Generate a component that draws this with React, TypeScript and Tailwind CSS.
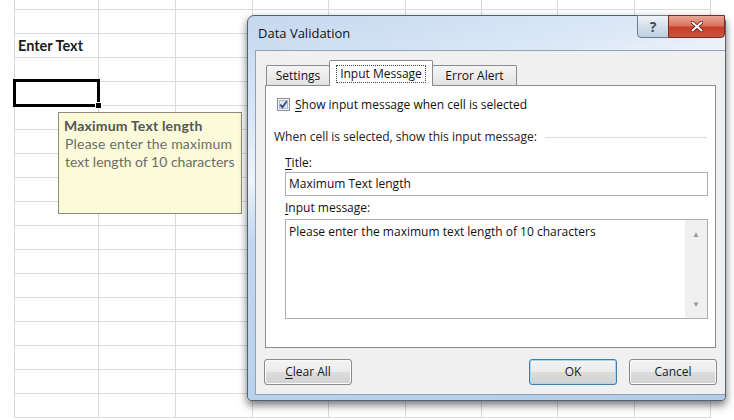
import React from 'react';

const colWidths = [84, 77, 77, 76, 77, 76, 76, 77, 76];
const rowHeights = [10, ...Array(17).fill(24)];

const dialogFont = { fontFamily: '"Open Sans", "Noto Sans", sans-serif' };
const sheetFont = { fontFamily: 'Lato, "Open Sans", sans-serif' };

function Checkbox() {
  return (
    <svg width="13" height="13" viewBox="0 0 13 13">
      <rect x="0.5" y="0.5" width="12" height="12" fill="#f4f4f4" stroke="#8e8f8f" />
      <rect x="2.5" y="2.5" width="8" height="8" fill="#dfe6ee" stroke="#b4bcc6" />
      <path d="M3.2 6.6 L5.4 9.2 L9.8 3.2" fill="none" stroke="#2c4a9a" strokeWidth="1.8" />
    </svg>
  );
}

function Button({ children, primary }: { children: React.ReactNode; primary?: boolean }) {
  return (
    <div
      className={
        'h-[26px] w-[88px] flex items-center justify-center rounded-[3px] border text-[12px] text-[#1a1a1a] bg-[linear-gradient(180deg,#f4f4f4_0%,#ebebeb_48%,#dcdcdc_52%,#d2d2d2_100%)] ' +
        (primary
          ? 'border-[#3c7fb1] shadow-[inset_0_0_0_1px_#a7d8f0]'
          : 'border-[#8a8a8a] shadow-[inset_0_0_0_1px_#fafafa]')
      }
    >
      {children}
    </div>
  );
}

export default function App() {
  return (
    <div className="relative w-[734px] h-[420px] overflow-hidden bg-white">
      {/* spreadsheet grid */}
      <div className="w-[726px] h-full overflow-hidden">
        <div className="ml-[14px] border-l border-[#dadada]" style={sheetFont}>
          {rowHeights.map((h, r) => (
            <div key={r} className="flex">
              {colWidths.map((w, c) => (
                <div
                  key={c}
                  className="shrink-0 border-r border-b border-[#dadada] flex items-center pl-[3px] text-[14.5px] font-bold text-[#1c1c1c]"
                  style={{ width: w, height: h }}
                >
                  {r === 2 && c === 0 ? 'Enter Text' : null}
                </div>
              ))}
            </div>
          ))}
        </div>
      </div>

      {/* selected cell */}
      <div className="absolute left-[13px] top-[79px] w-[87px] h-[28px] border-[3px] border-black" />
      <div className="absolute left-[95px] top-[102px] w-[7px] h-[7px] bg-black border border-white" />

      {/* input message tooltip */}
      <div
        className="absolute left-[58px] top-[112px] w-[184px] h-[102px] bg-[#fbfbd9] border border-[#8b8b80] pl-[5px] pt-[4px] leading-[18px] text-[14px] whitespace-nowrap"
        style={sheetFont}
      >
        <div className="font-bold text-[#555555] tracking-[0.2px]">Maximum Text length</div>
        <div className="text-[#6c6c6c] pl-px tracking-[0.2px]">Please enter the maximum</div>
        <div className="text-[#6c6c6c] pl-px">text length of 10 characters</div>
      </div>

      {/* Data Validation dialog */}
      <div
        className="absolute left-[247px] top-[15px] w-[479px] h-[386px] flex flex-col rounded-t-[7px] rounded-b-[4px] border border-[#56616e] bg-[linear-gradient(165deg,#c4d8ef_0%,#dce8f6_22%,#eef4fb_32%,#c2d7ee_44%,#b3cde9_100%)] shadow-[0_4px_8px_rgba(0,0,0,0.55)] pl-[7px] pb-[5px]"
        style={dialogFont}
      >
        <div className="h-[34px] flex items-center pl-[3px] pt-[2px] text-[13px] text-[#111]">Data Validation</div>

        {/* caption buttons */}
        <div className="absolute right-0 top-[-1px] flex">
          <div className="w-[32px] h-[23px] flex items-center justify-center rounded-bl-[4px] border border-[#6d7c8e] bg-[linear-gradient(180deg,#eef3f9_0%,#d5e0ec_50%,#bfcfe0_100%)] text-[#3b4a5c] text-[14px] font-bold leading-none">
            ?
          </div>
          <div className="w-[57px] h-[23px] -ml-px flex items-center justify-center rounded-br-[4px] border border-[#7a2a1e] bg-[linear-gradient(180deg,#e9a797_0%,#d8745f_45%,#c63f26_55%,#c9543c_100%)]">
            <svg width="12" height="11" viewBox="0 0 12 11">
              <path d="M1.5 1.5 L10.5 9.5 M10.5 1.5 L1.5 9.5" stroke="#5a1a10" strokeWidth="3.6" strokeLinecap="round" />
              <path d="M1.5 1.5 L10.5 9.5 M10.5 1.5 L1.5 9.5" stroke="#ffffff" strokeWidth="2" strokeLinecap="round" />
            </svg>
          </div>
        </div>

        {/* client area */}
        <div className="flex-1 flex flex-col bg-[#f0f0f0] border border-[#8fa2b8] border-r-0 pt-[9px] pl-[9px] pr-[8px] text-[12px] text-[#111]">
          {/* tabs */}
          <div className="h-[25px] flex items-end pl-px">
            <div className="w-[64px] h-[20px] flex items-center justify-center border border-b-0 border-[#898c95] rounded-t-[2px] bg-[linear-gradient(180deg,#f5f5f5_0%,#e3e3e3_100%)]">
              Settings
            </div>
            <div className="relative z-10 w-[104px] h-[26px] -mx-px -mb-px flex items-center justify-center border border-b-0 border-[#898c95] rounded-t-[2px] bg-white">
              <span className="px-[3px] leading-[16px] border border-dotted border-[#444]">Input Message</span>
            </div>
            <div className="w-[85px] h-[20px] flex items-center justify-center border border-b-0 border-[#898c95] rounded-t-[2px] bg-[linear-gradient(180deg,#f5f5f5_0%,#e3e3e3_100%)]">
              Error Alert
            </div>
          </div>

          {/* tab panel */}
          <div className="h-[263px] w-[451px] bg-white border border-[#898c95] flex flex-col pt-[11px]">
            <div className="h-[15px] flex items-center pl-[11px] gap-[5px]">
              <Checkbox />
              <span>
                <u className="underline-offset-2">S</u>how input message when cell is selected
              </span>
            </div>

            <div className="mt-[17px] h-[16px] flex items-center pl-[8px] pr-[8px] gap-[8px] text-[#222]">
              <span className="shrink-0">When cell is selected, show this input message:</span>
              <div className="flex-1 h-px bg-[#dcdcdc]" />
            </div>

            <div className="mt-[10px] h-[16px] flex items-center pl-[19px]">
              <span>
                <u className="underline-offset-2">T</u>itle:
              </span>
            </div>
            <div className="mt-px ml-[19px] mr-[7px] h-[24px] border border-[#abadb3] flex items-center pl-[3px]">
              Maximum Text length
            </div>

            <div className="mt-[4px] h-[16px] flex items-center pl-[19px]">
              <span>
                <u className="underline-offset-2">I</u>nput message:
              </span>
            </div>
            <div className="mt-[3px] ml-[19px] mr-[7px] h-[100px] border border-[#abadb3] flex">
              <div className="flex-1 pl-[3px] pt-[3px]">Please enter the maximum text length of 10 characters</div>
              <div className="w-[22px] bg-[#f0f0f0] flex flex-col items-center justify-between py-[8px] text-[8px] text-[#9a9a9a]">
                <span>▲</span>
                <span>▼</span>
              </div>
            </div>
          </div>

          {/* buttons */}
          <div className="mt-[11px] flex -ml-px">
            <Button>
              <span>
                <u className="underline-offset-2">C</u>lear All
              </span>
            </Button>
            <div className="flex-1" />
            <Button primary>OK</Button>
            <div className="w-[12px]" />
            <Button>Cancel</Button>
          </div>
        </div>
      </div>
    </div>
  );
}
